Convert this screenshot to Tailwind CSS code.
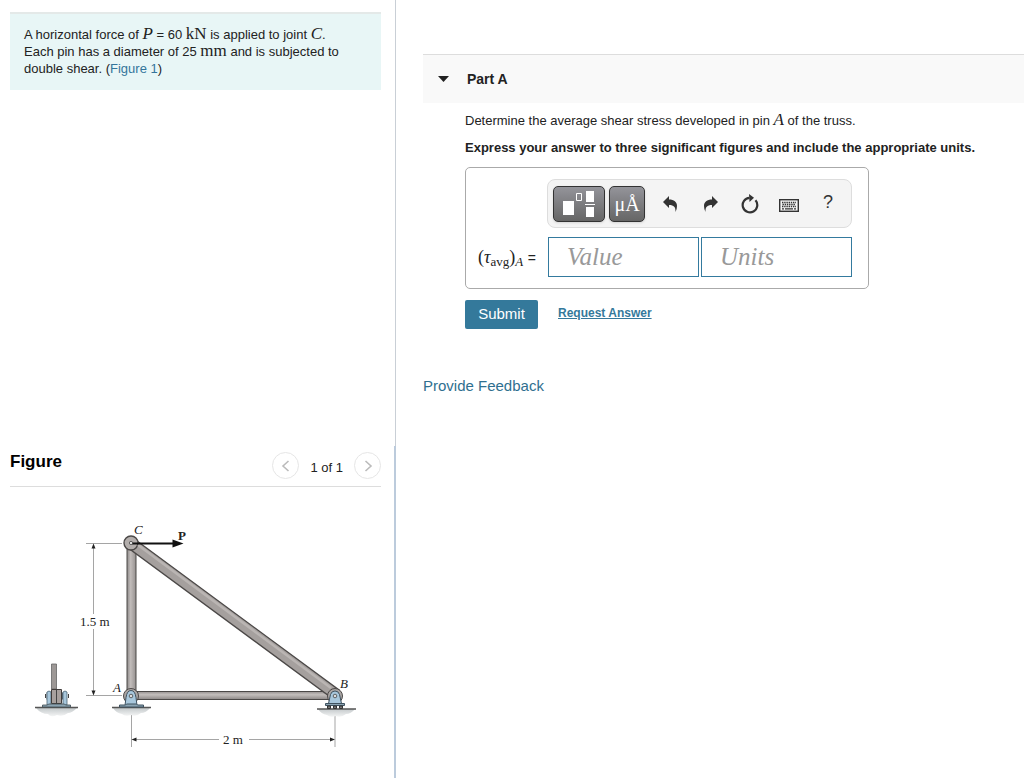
<!DOCTYPE html>
<html lang="en">
  <head>
    <meta charset="UTF-8" />
    <meta name="viewport" content="width=device-width, initial-scale=1.0" />
    <title>Part A - Average Shear Stress</title>
    <script src="https://cdn.jsdelivr.net/npm/@tailwindcss/browser@4"></script>
  </head>
  <body
    class="flex min-h-screen bg-white font-['Liberation_Sans',Arial,sans-serif] text-[13px] text-[#222]"
  >
    <!-- Left column: problem text and figure -->
    <aside class="flex w-[396px] shrink-0 flex-col">
      <section class="flex-1 border-r border-[#c9cfd6] pt-3 pr-3.5 pl-2.5">
        <p
          class="border-t-2 border-[#e4e9e8] bg-[#e8f6f6] px-3.5 pt-3 pb-[13px] leading-[17px]"
        >
          A horizontal force of
          <i class="font-['Liberation_Serif',serif] text-[17px] leading-[0]">P</i>
          = 60
          <span class="font-['Liberation_Serif',serif] text-[17px] leading-[0]">kN</span>
          is applied to joint
          <i class="font-['Liberation_Serif',serif] text-[17px] leading-[0]">C</i>.<br />
          Each pin has a diameter of 25
          <span class="font-['Liberation_Serif',serif] text-[17px] leading-[0]">mm</span>
          and is subjected to<br />
          double shear. (<a href="#figure" class="text-[#34759b]">Figure 1</a>)
        </p>
      </section>

      <section
        id="figure"
        class="border-r-2 border-[#bccbdc] pr-[13px] pb-2 pl-2.5"
      >
        <header
          class="flex h-[41px] items-start justify-between border-b border-[#ddd]"
        >
          <h2 class="pt-[3px] text-[17px] font-bold text-black">Figure</h2>
          <div class="flex items-center gap-[11px] pt-1.5 text-[13px]">
            <button
              aria-label="Previous figure"
              class="flex size-[27px] items-center justify-center rounded-full border border-[#e6e6e6]"
            >
              <svg class="size-3" viewBox="0 0 12 12" fill="none" stroke="#bbb" stroke-width="1.6">
                <path d="M8.500 1 3 6l5.500 5" />
              </svg>
            </button>
            <span class="pt-1">1 of 1</span>
            <button
              aria-label="Next figure"
              class="flex size-[27px] items-center justify-center rounded-full border border-[#e6e6e6]"
            >
              <svg class="size-3" viewBox="0 0 12 12" fill="none" stroke="#bbb" stroke-width="1.6">
                <path d="M3.500 1 9 6l-5.500 5" />
              </svg>
            </button>
          </div>
        </header>

        <!-- Truss ABC -->
        <svg
          class="mt-[13px] block w-full"
          viewBox="0 0 371 270"
          role="img"
          aria-label="Truss with joints A, B and C"
          font-family="Liberation Serif, serif"
          font-size="13"
          fill="#222"
        >
          <defs>
            <linearGradient id="barV">
              <stop offset="0" stop-color="#8f8b8a" />
              <stop offset=".4" stop-color="#c1bcba" />
              <stop offset="1" stop-color="#969190" />
            </linearGradient>
            <linearGradient id="barH" x2="0" y2="1">
              <stop offset="0" stop-color="#979291" />
              <stop offset=".4" stop-color="#c3bebc" />
              <stop offset="1" stop-color="#8c8786" />
            </linearGradient>
            <linearGradient id="soil" x2="0" y2="1">
              <stop offset="0" stop-color="#c4c9cb" />
              <stop offset="1" stop-color="#f4f5f5" />
            </linearGradient>
          </defs>

          <!-- dimension lines -->
          <g stroke="#a5a5a5" stroke-width="1">
            <path d="M76 43.500h36M76 195.500h36M83.500 46v68M83.500 129v64M121.500 212v35M325 212v35M124 239.500h85M239 239.500h83" />
          </g>
          <path d="m83.500 43.500-2 5h4zM83.500 195.500l-2-5h4zM121.500 239.500l5-2v4zM325 239.500l-5-2v4z" />

          <!-- soil -->
          <g fill="url(#soil)">
            <path d="M26 208h41q-5 5-9 5-5 4-11 2-6 3-9-1-7 0-12-6z" />
            <path d="M103 208h37q-4 5-9 5-5 4-10 2-6 2-9-1-6-1-9-6z" />
            <path d="M308 209h37q-4 5-9 5-5 4-10 2-6 2-9-1-6-1-9-6z" />
          </g>
          <path d="M25 207.500h43M102 207.500h39M307 209h39" stroke="#555" stroke-width="1.500" />

          <!-- members -->
          <g stroke="#4b4847" stroke-width="1">
            <path d="M117 45h9v150h-9z" fill="url(#barV)" />
            <path d="M121 191.500h204v8H121z" fill="url(#barH)" />
            <path d="M125 39.500 329 190l-6.500 8.500L119 48.500z" fill="#a5a09e" stroke-width="1.300" />
            <circle cx="121" cy="43" r="7" fill="#b3aeac" stroke-width="1.400" />
            <circle cx="121" cy="196" r="7.500" fill="#aaa5a3" />
            <circle cx="325" cy="196" r="7.500" fill="#aaa5a3" />
          </g>
          <path d="M128 45 321 188" stroke="#bab5b3" stroke-width="2.500" />

          <!-- supports A and B -->
          <g fill="#a8c7dc" stroke="#3f5260" stroke-width="1">
            <path d="M115 205.500l1-8q1-7 5-7t5 7l1 8z" />
            <path d="M318.500 203.500l2-9q1-3.500 4.500-3.500t4.500 3.500l2 9z" />
            <path d="M109.500 207v-2h6l1-1h10l1 1h6v2z" fill="#8ba4b3" />
            <path d="M315.500 203.500h19v2h-19z" fill="#8ba4b3" />
          </g>
          <g fill="#ddd" stroke="#333" stroke-width="1">
            <circle cx="121" cy="196" r="1.800" stroke-width=".7" />
            <circle cx="325" cy="196" r="1.800" stroke-width=".7" />
            <path d="M317.500 206h3v2.500h-3zM323.500 206h3v2.500h-3zM329.500 206h3v2.500h-3z" fill="#777" />
          </g>

          <!-- side view of the pin -->
          <path d="M41.500 164h5v25h-5z" fill="#9d9896" stroke="#666" stroke-width=".8" />
          <path d="M36.500 192.500h20v7h-20z" fill="#566875" />
          <path d="M37 192q2-2 4 0v13h-4zM53 192q2-2 4 0v13h-4z" fill="#a8c7dc" stroke="#4b6474" stroke-width=".8" />
          <path d="M41.500 189.500h10v14h-10z" fill="#a7a09e" stroke="#413c3b" />
          <path d="M46.500 190v13M35.500 194v4M58.500 194v4" stroke="#444" fill="none" />
          <path d="M32.500 207v-2h5l1-1h16l1 1h5v2z" fill="#8ba4b3" stroke="#3f4b52" stroke-width=".8" />

          <!-- force P -->
          <path d="M122 43.500h42" stroke="#111" stroke-width="1.800" />
          <path d="m173.500 43.500-11-4v8z" fill="#111" />
          <circle cx="121" cy="43" r="1.600" fill="#eee" stroke="#333" stroke-width=".7" />

          <!-- labels -->
          <text x="124" y="34" font-style="italic">C</text>
          <text x="168" y="40" font-weight="bold">P</text>
          <text x="103" y="192" font-style="italic">A</text>
          <text x="330" y="188" font-style="italic">B</text>
          <text x="70" y="126">1.5 m</text>
          <text x="213" y="244">2 m</text>
        </svg>
      </section>
    </aside>

    <!-- Right column: question part -->
    <main class="min-w-0 flex-1 pt-[54px] pl-[27px]">
      <header
        class="flex h-[49px] items-center border-t border-[#ddd] bg-[#f9f9f9] pl-[15px]"
      >
        <button aria-label="Collapse Part A">
          <svg class="h-1.5 w-[11px]" viewBox="0 0 11 6"><path d="M0 0h11L5.500 6z" fill="#222" /></svg>
        </button>
        <h1 class="pl-[18px] text-sm font-bold">Part A</h1>
      </header>

      <div class="pl-[42px]">
        <p class="pt-[9px] leading-[18px]">
          Determine the average shear stress developed in pin
          <i class="font-['Liberation_Serif',serif] text-[17px] leading-[0]">A</i>
          of the truss.
        </p>
        <p class="pt-[9px] leading-[18px] font-bold">
          Express your answer to three significant figures and include the
          appropriate units.
        </p>

        <form>
          <div
            class="mt-2.5 flex w-[404px] flex-col gap-[9px] rounded-[5px] border border-[#aaa] py-[11px] pr-4 pl-3"
          >
            <!-- Toolbar -->
            <div
              class="ml-[69px] flex h-[49px] items-center rounded-lg border border-[#ddd] bg-[#f4f4f4] px-[5px] text-[#333]"
            >
              <button
                type="button"
                aria-label="Templates"
                class="flex h-9 w-[52px] items-center justify-center rounded-[5px] border border-[#333] bg-linear-to-b from-[#94949a] to-[#666] shadow"
              >
                <svg class="h-7 w-8" viewBox="0 0 32 28" fill="#fff">
                  <path d="M0 11h11v14H0zM23 1h8v11h-8zM22 14h10v1H22zM23 17h8v10h-8z" />
                  <path d="M13.500 3.500h5v7h-5z" fill="none" stroke="#fff" />
                </svg>
              </button>
              <button
                type="button"
                aria-label="Symbols"
                class="ml-1 h-9 w-9 rounded-[5px] border border-[#333] bg-linear-to-b from-[#94949a] to-[#666] font-['Liberation_Serif',serif] text-xl leading-none text-white shadow"
              >
                μÅ
              </button>
              <button type="button" aria-label="Undo" class="ml-[18px]">
                <svg class="h-4 w-[15px]" viewBox="0 0 15 16" fill="currentColor">
                  <path d="M0 6 6 0v3.500c5 0 8 2.500 8 6.500 0 2-.5 4-1.500 6 .2-5-1.500-7-6.500-7V12z" />
                </svg>
              </button>
              <button type="button" aria-label="Redo" class="ml-[25px]">
                <svg class="h-4 w-[15px]" viewBox="0 0 15 16" fill="currentColor">
                  <path d="M15 6 9 0v3.500C4 3.500 1 6 1 10c0 2 .5 4 1.500 6-.2-5 1.500-7 6.500-7V12z" />
                </svg>
              </button>
              <button type="button" aria-label="Reset" class="ml-[23px]">
                <svg class="h-5 w-[18px]" viewBox="0 0 18 20">
                  <path d="M14.500 6.300A7.300 7.300 0 1 1 8.500 3.800" fill="none" stroke="currentColor" stroke-width="2.200" />
                  <path d="m8 0 5 3.700L8.500 8z" fill="currentColor" />
                </svg>
              </button>
              <button type="button" aria-label="Keyboard" class="ml-5 pt-1">
                <svg class="h-[13px] w-5" viewBox="0 0 20 13" fill="none" stroke="currentColor">
                  <rect x=".7" y=".7" width="18.600" height="11.600" stroke-width="1.400" />
                  <path d="M3 3.500h14M3.500 5.500h13M3 7.500h14" stroke-dasharray="1.400 .8" stroke-width="1.300" />
                  <path d="M3 9.800h2M6 9.800h8M15 9.800h2" stroke-width="1.200" />
                </svg>
              </button>
              <button type="button" aria-label="Help" class="ml-6 pb-1 text-lg leading-none">?</button>
            </div>

            <div class="flex h-10 items-center">
              <label
                for="value"
                class="w-[70px] font-['Liberation_Serif',serif] text-lg leading-none whitespace-nowrap"
                >(<i>τ</i><sub class="bottom-[-3px] text-[13px]">avg</sub>)<sub
                  class="bottom-[-3px] text-[13px] italic"
                  >A</sub
                >
                <span class="font-['Liberation_Sans',Arial,sans-serif] text-sm leading-none">=</span></label
              >
              <input
                id="value"
                placeholder="Value"
                class="h-10 w-[151px] border border-[#347a9e] px-[18px] font-['Liberation_Serif',serif] text-[25px] italic placeholder:text-[#999]"
              />
              <input
                aria-label="Units"
                placeholder="Units"
                class="ml-0.5 h-10 w-[151px] border border-[#347a9e] px-[18px] font-['Liberation_Serif',serif] text-[25px] italic placeholder:text-[#999]"
              />
            </div>
          </div>

          <div class="flex items-center pt-[11px]">
            <button
              type="submit"
              class="h-[29px] w-[73px] rounded-xs bg-[#34799b] text-[15px] text-white"
            >
              Submit
            </button>
            <a href="#" class="ml-5 pb-1 text-xs font-bold text-[#34799b] underline"
              >Request Answer</a
            >
          </div>
        </form>
      </div>

      <a href="#" class="mt-[46px] inline-block text-[15px] text-[#2f6f8f]"
        >Provide Feedback</a
      >
    </main>
  </body>
</html>
